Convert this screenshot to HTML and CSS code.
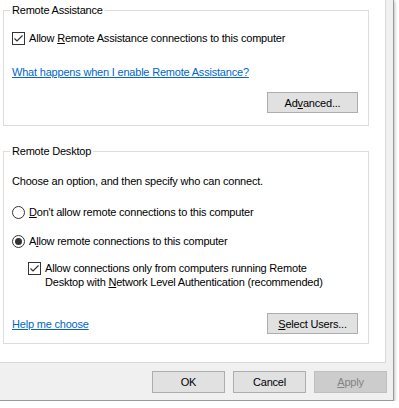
FILE: index.html
```html
<!DOCTYPE html>
<html lang="en">
<head>
  <meta charset="UTF-8">
  <title>System Properties - Remote</title>
  <link rel="stylesheet" href="styles.css">
</head>
<body>

<div class="dialogo">
  <div class="panel">

    <fieldset class="grupo grupo-asistencia">
      <legend>Remote Assistance</legend>
      <label class="fila opcion">
        <svg class="casilla" width="13" height="13" viewBox="0 0 13 13">
          <rect x="0.5" y="0.5" width="12" height="12" fill="#fff" stroke="#333"/>
          <path d="M2.5 6.5 L5 9 L10.5 3.5" fill="none" stroke="#333" stroke-width="1.2"/>
        </svg>
        <span>Allow <u>R</u>emote Assistance connections to this computer</span>
      </label>
      <div class="fila enlace-fila">
        <a class="enlace" href="#">What happens when I enable Remote Assistance?</a>
      </div>
      <div class="fila derecha">
        <button class="btn">Ad<u>v</u>anced...</button>
      </div>
    </fieldset>

    <fieldset class="grupo grupo-escritorio">
      <legend>Remote Desktop</legend>
      <div class="fila texto">Choose an option, and then specify who can connect.</div>
      <label class="fila opcion radio-uno">
        <svg class="casilla" width="13" height="13" viewBox="0 0 13 13">
          <circle cx="6.5" cy="6.5" r="6" fill="#fff" stroke="#333"/>
        </svg>
        <span><u>D</u>on't allow remote connections to this computer</span>
      </label>
      <label class="fila opcion radio-dos">
        <svg class="casilla" width="13" height="13" viewBox="0 0 13 13">
          <circle cx="6.5" cy="6.5" r="6" fill="#fff" stroke="#333"/>
          <circle cx="6.5" cy="6.5" r="3.5" fill="#333"/>
        </svg>
        <span>A<u>l</u>low remote connections to this computer</span>
      </label>
      <label class="fila opcion sub-opcion">
        <svg class="casilla" width="13" height="13" viewBox="0 0 13 13">
          <rect x="0.5" y="0.5" width="12" height="12" fill="#fff" stroke="#333"/>
          <path d="M2.5 6.5 L5 9 L10.5 3.5" fill="none" stroke="#333" stroke-width="1.2"/>
        </svg>
        <span class="texto-largo">Allow connections only from computers running Remote<br>Desktop with <u>N</u>etwork Level Authentication (recommended)</span>
      </label>
      <div class="fila pie-grupo">
        <a class="enlace" href="#">Help me choose</a>
        <button class="btn"><u>S</u>elect Users...</button>
      </div>
    </fieldset>

  </div>

  <div class="botones">
    <button class="btn btn-pie">OK</button>
    <button class="btn btn-pie">Cancel</button>
    <button class="btn btn-pie deshabilitado"><u>A</u>pply</button>
  </div>
</div>

</body>
</html>
```

FILE: styles.css
```css
body {
  margin: 0;
  background: #fff;
  font-family: 'Liberation Sans', Arial, sans-serif;
  font-size: 11px;
  letter-spacing: -0.2px;
  color: #000;
}

.dialogo {
  width: 393px;
  height: 400px;
  background-color: #f0f0f0;
  border-right: 1px solid #9a9a9a;
  border-bottom: 1px solid #9a9a9a;
  box-shadow: 1px 1px 3px rgba(0, 0, 0, 0.25);
}

.panel {
  box-sizing: border-box;
  width: 386px;
  height: 363px;
  background-color: #fff;
  border-right: 1px solid #d9d9d9;
  border-bottom: 1px solid #d9d9d9;
  padding-top: 2px;
}

.grupo {
  box-sizing: border-box;
  width: 366px;
  margin: 0 0 0 3px;
  padding: 0 10px 0 8px;
  border: 1px solid #dcdcdc;
  min-width: 0;
}

.grupo legend {
  padding: 0 2px;
  margin-left: -2px;
  line-height: 16px;
}

.grupo-asistencia {
  padding-bottom: 12px;
}

.grupo-escritorio {
  margin-top: 17px;
  padding-bottom: 9px;
}

.fila {
  display: flex;
  align-items: center;
  line-height: 16px;
}

.opcion {
  gap: 4px;
}

.casilla {
  flex-shrink: 0;
}

.grupo-asistencia .opcion { margin-top: 12px; }
.enlace-fila { margin-top: 18px; }
.derecha { justify-content: flex-end; margin-top: 12px; }

.texto { margin-top: 14px; }
.radio-uno { margin-top: 15px; }
.radio-dos { margin-top: 13px; }

.sub-opcion {
  margin-top: 12px;
  margin-left: 16px;
  align-items: flex-start;
  line-height: 14px;
}

.texto-largo {
  white-space: nowrap;
}

.sub-opcion .casilla {
  margin-top: 1px;
}

.pie-grupo {
  justify-content: space-between;
  margin-top: 24px;
}

.enlace {
  color: #0066cc;
  text-decoration: underline;
}

.btn {
  box-sizing: border-box;
  width: 91px;
  height: 21px;
  padding: 0;
  font-family: inherit;
  font-size: 11px;
  letter-spacing: -0.2px;
  color: #000;
  background-color: #e1e1e1;
  border: 1px solid #adadad;
}

.botones {
  display: flex;
  justify-content: flex-end;
  gap: 8px;
  padding: 8px 6px 0 0;
}

.btn-pie {
  width: 73px;
  height: 22px;
}

.deshabilitado {
  background-color: #cccccc;
  border-color: #bfbfbf;
  color: #838383;
}
```
